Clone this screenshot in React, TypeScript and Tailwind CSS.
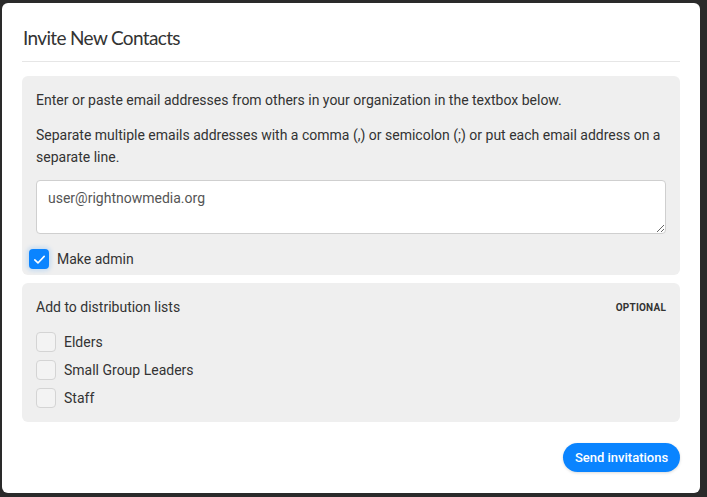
import React from "react";

function Box({ checked, className = "" }: { checked?: boolean; className?: string }) {
  if (checked) {
    return (
      <span className={`flex h-5 w-5 items-center justify-center rounded-[4px] bg-[#0a84ff] shadow-[0_0_4px_2px_rgba(10,132,255,0.18)] ${className}`}>
        <svg width="15" height="15" viewBox="0 0 24 24" fill="none" stroke="white" strokeWidth="2.6" strokeLinecap="round" strokeLinejoin="round">
          <path d="M4.5 12.5l5 5L19.5 7" />
        </svg>
      </span>
    );
  }
  return <span className={`block h-5 w-5 rounded-[4px] border border-[#d4d4d4] bg-[#f3f3f3] ${className}`} />;
}

export default function App() {
  return (
    <div className="h-[497px] w-[707px] overflow-hidden bg-[#2a2a2a] pl-[2px] pt-[3px] font-['Roboto',sans-serif]">
      <div className="flex h-[490px] w-[698px] flex-col rounded-[6px] bg-white px-5">
        <div className="flex h-[59px] items-center border-b border-[#e6e6e6] pl-[1px] pt-[12px]">
          <h1 className="font-['Lato',sans-serif] text-[19px] tracking-[-0.65px] text-[#333]">Invite New Contacts</h1>
        </div>

        <div className="mt-[14px] rounded-[6px] bg-[#efefef] px-[14px] pb-[6px] pt-[13px] text-[14px] leading-[22px] text-[#333]">
          <p>Enter or paste email addresses from others in your organization in the textbox below.</p>
          <p className="mt-[13px]">
            Separate multiple emails addresses with a comma (,) or semicolon (;) or put each email address on a separate line.
          </p>
          <textarea
            defaultValue="user@rightnowmedia.org"
            className="mt-[12px] block h-[54px] w-[630px] rounded-[4px] border border-[#cfcfcf] bg-white px-[11px] pt-[7px] text-[14px] leading-[20px] text-[#555] outline-none"
          />
          <label className="-ml-[7px] mt-[15px] flex items-center gap-2">
            <Box checked />
            <span className="leading-5">Make admin</span>
          </label>
        </div>

        <div className="mt-[8px] rounded-[6px] bg-[#efefef] px-[14px] pb-[14px] pt-[14px] text-[14px] text-[#333]">
          <div className="flex items-center justify-between">
            <span className="leading-5">Add to distribution lists</span>
            <span className="text-[10px] font-bold tracking-[0.2px] text-[#333]">OPTIONAL</span>
          </div>
          <div className="mt-[15px] flex flex-col gap-2">
            {["Elders", "Small Group Leaders", "Staff"].map((l) => (
              <label key={l} className="flex items-center gap-2">
                <Box />
                <span className="leading-5">{l}</span>
              </label>
            ))}
          </div>
        </div>

        <div className="mt-[21px] flex justify-end">
          <button className="h-[29px] w-[117px] rounded-full bg-[#0a84ff] text-[13px] font-medium text-white shadow-[0_1px_3px_rgba(0,0,0,0.15)]">
            Send invitations
          </button>
        </div>
      </div>
    </div>
  );
}
